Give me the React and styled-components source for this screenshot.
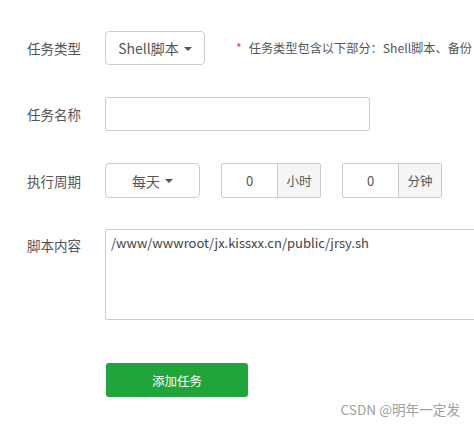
import styled, { createGlobalStyle } from "styled-components";

const GlobalStyle = createGlobalStyle`
  html, body {
    margin: 0;
    padding: 0;
    background: #fff;
  }
  body {
    font-family: "Noto Sans CJK SC", "Open Sans", sans-serif;
    color: #555;
    overflow: hidden;
  }
`;

const Page = styled.div`
  position: relative;
  width: 474px;
  height: 426px;
  overflow: hidden;
  padding: 31px 0 0 27px;
  box-sizing: border-box;
`;

const Row = styled.div`
  display: flex;
  align-items: ${(p) => (p.$top ? "flex-start" : "center")};
  height: ${(p) => p.$h || 34}px;
  margin-bottom: ${(p) => p.$mb ?? 32}px;
  white-space: nowrap;
`;

const Label = styled.label`
  width: 78px;
  flex: none;
  font-size: 13.5px;
  color: #555;
  padding-top: ${(p) => (p.$top ? "6px" : "0")};
`;

const Select = styled.div`
  box-sizing: border-box;
  width: ${(p) => p.$w}px;
  height: ${(p) => p.$h || 34}px;
  border: 1px solid #ccc;
  border-radius: 4px;
  display: flex;
  align-items: center;
  justify-content: center;
  gap: 5px;
  font-size: 14px;
  color: #555;
  flex: none;
`;

const Caret = styled.span`
  width: 0;
  height: 0;
  border-left: 4px solid transparent;
  border-right: 4px solid transparent;
  border-top: 4px solid #555;
  margin-top: 1px;
`;

const Note = styled.div`
  margin-left: 31px;
  font-size: 12.2px;
  color: #555;
  display: flex;
  align-items: center;
`;

const Star = styled.span`
  color: #e4393c;
  margin-right: 7px;
`;

const TextInput = styled.div`
  box-sizing: border-box;
  width: ${(p) => p.$w}px;
  height: ${(p) => p.$h || 34}px;
  border: 1px solid #ccc;
  border-radius: 2px;
  flex: none;
`;

const Group = styled.div`
  display: flex;
  box-sizing: border-box;
  width: 100px;
  height: 35px;
  border: 1px solid #ccc;
  border-radius: 2px;
  margin-left: ${(p) => p.$ml}px;
  flex: none;
`;

const GroupValue = styled.div`
  width: 55px;
  display: flex;
  align-items: center;
  justify-content: center;
  font-size: 13px;
  color: #555;
`;

const Addon = styled.div`
  flex: 1;
  border-left: 1px solid #ccc;
  background: #f5f5f5;
  display: flex;
  align-items: center;
  justify-content: center;
  font-size: 12.5px;
  color: #555;
`;

const TextArea = styled.div`
  box-sizing: border-box;
  width: 380px;
  height: 91px;
  border: 1px solid #ccc;
  border-radius: 2px;
  padding: 3px 5px;
  font-size: 13px;
  color: #444;
  flex: none;
`;

const Submit = styled.button`
  margin-left: 79px;
  width: 142px;
  height: 34px;
  border: none;
  border-radius: 3px;
  background: #20a53a;
  color: #fff;
  font-family: inherit;
  font-size: 12.5px;
`;

const Watermark = styled.div`
  position: absolute;
  right: 14px;
  bottom: 7px;
  font-size: 13.6px;
  color: #a0a0a0;
`;

export default function App() {
  return (
    <>
      <GlobalStyle />
      <Page>
        <Row>
          <Label>任务类型</Label>
          <Select $w={100}>
            Shell脚本 <Caret />
          </Select>
          <Note>
            <Star>*</Star>
            任务类型包含以下部分：Shell脚本、备份
          </Note>
        </Row>
        <Row>
          <Label>任务名称</Label>
          <TextInput $w={265} />
        </Row>
        <Row $h={35} $mb={31}>
          <Label>执行周期</Label>
          <Select $w={95} $h={35}>
            每天 <Caret />
          </Select>
          <Group $ml={21}>
            <GroupValue>0</GroupValue>
            <Addon>小时</Addon>
          </Group>
          <Group $ml={21}>
            <GroupValue>0</GroupValue>
            <Addon>分钟</Addon>
          </Group>
        </Row>
        <Row $top $h={91} $mb={43}>
          <Label $top>脚本内容</Label>
          <TextArea>/www/wwwroot/jx.kissxx.cn/public/jrsy.sh</TextArea>
        </Row>
        <Submit>添加任务</Submit>
        <Watermark>CSDN @明年一定发</Watermark>
      </Page>
    </>
  );
}
